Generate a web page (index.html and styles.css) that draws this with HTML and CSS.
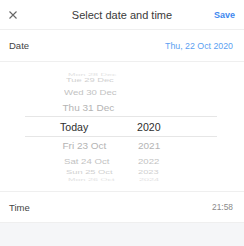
FILE: index.html
```html
<!DOCTYPE html>
<html>
<head>
<meta charset="utf-8">
<link rel="stylesheet" href="styles.css">
</head>
<body>
<div class="screen">
  <header class="header">
    <span class="close">
      <svg width="8" height="8" viewBox="0 0 8 8"><path d="M0.5 0.5 L7.5 7.5 M7.5 0.5 L0.5 7.5" stroke="#666666" stroke-width="1.1" fill="none"/></svg>
    </span>
    <span class="title">Select date and time</span>
    <span class="save">Save</span>
  </header>
  <div class="row date-row">
    <span class="label">Date</span>
    <span class="value blue">Thu, 22 Oct 2020</span>
  </div>
  <div class="picker">
    <div class="prow r4 h5"><span class="day"><span class="txt">Mon 28 Dec</span></span><span class="year"></span></div>
    <div class="prow r3 h8"><span class="day"><span class="txt">Tue 29 Dec</span></span><span class="year"></span></div>
    <div class="prow r2 h14"><span class="day"><span class="txt">Wed 30 Dec</span></span><span class="year"></span></div>
    <div class="prow r1 h17"><span class="day"><span class="txt">Thu 31 Dec</span></span><span class="year"></span></div>
    <div class="prow r0 sel"><span class="day"><span class="txt">Today</span></span><span class="year"><span class="txt">2020</span></span></div>
    <div class="prow r1 h17"><span class="day"><span class="txt">Fri 23 Oct</span></span><span class="year"><span class="txt">2021</span></span></div>
    <div class="prow r2 h14"><span class="day"><span class="txt">Sat 24 Oct</span></span><span class="year"><span class="txt">2022</span></span></div>
    <div class="prow r3 h8"><span class="day"><span class="txt">Sun 25 Oct</span></span><span class="year"><span class="txt">2023</span></span></div>
    <div class="prow r4 h5"><span class="day"><span class="txt">Mon 26 Oct</span></span><span class="year"><span class="txt">2024</span></span></div>
  </div>
  <div class="row time-row">
    <span class="label">Time</span>
    <span class="value gray">21:58</span>
  </div>
  <div class="footer"></div>
</div>
</body>
</html>
```
FILE: styles.css
```css
html, body {
  margin: 0;
  padding: 0;
  background: #ffffff;
}
body {
  font-family: "Liberation Sans", Arial, sans-serif;
  color: #333333;
  width: 244px;
  height: 246px;
  overflow: hidden;
}
.screen {
  display: flex;
  flex-direction: column;
  height: 246px;
}
.header {
  height: 29px;
  display: grid;
  grid-template-columns: 1fr auto 1fr;
  align-items: center;
  padding: 0 9px 0 9px;
  border-bottom: 1px solid #efefef;
  box-sizing: content-box;
}
.close {
  display: flex;
  align-items: center;
  height: 8px;
  margin-top: 1px;
}
.close svg {
  display: block;
}
.title {
  font-size: 11px;
  color: #3a3a3a;
}
.save {
  justify-self: end;
  font-size: 9px;
  font-weight: bold;
  color: #3e88ef;
}
.row {
  display: flex;
  justify-content: space-between;
  align-items: center;
  padding: 0 11px 0 9px;
}
.date-row {
  height: 31px;
  border-bottom: 1px solid #efefef;
}
.time-row {
  height: 30px;
  border-top: 1px solid #efefef;
  border-bottom: 1px solid #efefef;
}
.label {
  font-size: 9.5px;
  color: #444444;
}
.value {
  font-size: 8.8px;
}
.blue {
  color: #5c9ff2;
}
.gray {
  color: #8a8a8a;
  font-size: 8.4px;
}
.picker {
  height: 129px;
  padding-top: 9.5px;
  box-sizing: border-box;
  display: flex;
  flex-direction: column;
}
.prow {
  display: flex;
  align-items: center;
  margin: 0 27px 0 25px;
  font-size: 10px;
  overflow: hidden;
  flex-shrink: 0;
}
.day {
  width: 112px;
  box-sizing: border-box;
  display: flex;
}
.year {
  display: flex;
}
.txt {
  display: inline-block;
  white-space: nowrap;
  transform-origin: left center;
}
.sel {
  height: 21px;
  border-top: 1px solid #e6e6e6;
  border-bottom: 1px solid #e6e6e6;
  box-sizing: border-box;
}
.h17 { height: 17px; }
.h14 { height: 14px; }
.h8 { height: 8.5px; }
.h5 { height: 5px; }
.r0 .day { padding-left: 35px; }
.r0 .year { padding-left: 0; }
.r0 .txt { color: #2e2e2e; font-size: 10.6px; }
.r1 .day { padding-left: 37.5px; }
.r1 .year { padding-left: 1px; }
.r1 .txt { color: #b4b4b4; transform: scaleY(0.92); }
.r2 .day { padding-left: 39px; }
.r2 .year { padding-left: 1px; }
.r2 .txt { color: #c2c2c2; transform: scale(0.96, 0.78); }
.r3 .day { padding-left: 41px; }
.r3 .year { padding-left: 1px; }
.r3 .txt { color: #d0d0d0; transform: scale(0.93, 0.5); }
.r4 .day { padding-left: 43px; }
.r4 .year { padding-left: 2px; }
.r4 .txt { color: #e2e2e2; transform: scale(0.9, 0.3); }
.footer {
  flex: 1;
  background: #f5f6f8;
}
```
